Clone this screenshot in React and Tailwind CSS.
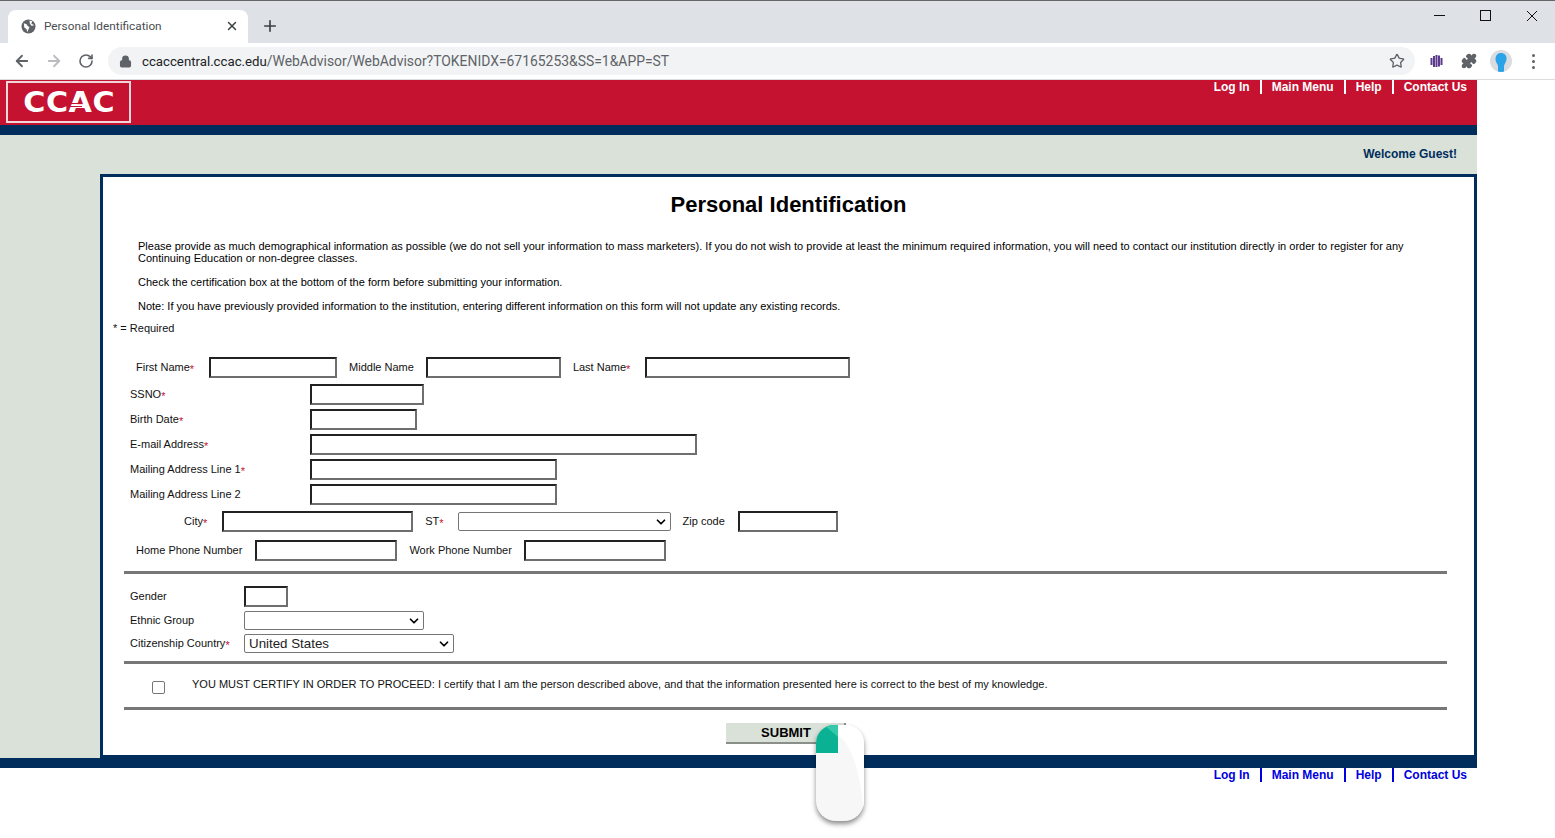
import { ArrowLeft, ArrowRight, RotateCw, Lock, Star, Puzzle, Plus, X, ChevronDown } from 'lucide-react';

const Req = () => <span className="relative top-[2px] text-[#c8102e]">*</span>;

// labels sit a pixel above the centre of their field
const Label = ({ className = '', children }) => <span className={`mb-[2px] ${className}`}>{children}</span>;

const Field = ({ w }) => (
  <input
    type="text"
    className={`h-[21px] shrink-0 border-2 border-t-[#222] border-l-[#222] border-r-[#6e6e6e] border-b-[#6e6e6e] bg-white ${w}`}
  />
);

const Select = ({ w, value, big }) => (
  <div className={`flex h-[19px] items-center justify-between rounded-[2px] border border-[#767676] bg-white pl-[4px] pr-[2px] ${w} ${big ? 'text-[13.33px] text-[#222]' : ''}`}>
    <span>{value}</span>
    <ChevronDown size={14} strokeWidth={3} className="text-black" />
  </div>
);

const NavLinks = ({ color }) => (
  <div className={`flex justify-end pr-[10px] text-[12px] font-bold leading-[14px] ${color}`}>
    <span className="pr-[10px]">Log In</span>
    <span className="border-l-2 border-current pl-[10px] pr-[10px]">Main Menu</span>
    <span className="border-l-2 border-current pl-[10px] pr-[10px]">Help</span>
    <span className="border-l-2 border-current pl-[10px]">Contact Us</span>
  </div>
);

const Row = ({ label, req, children, h }) => (
  <div className={`flex items-center pl-[27px] ${h}`}>
    <Label className="w-[180px] shrink-0">{label}{req && <Req />}</Label>
    {children}
  </div>
);

const Rule = ({ mt }) => <div className={`ml-[21px] mr-[27px] h-[3px] bg-[#777] ${mt}`} />;

const BrowserChrome = () => (
  <div className="h-[80px] border-b border-[#dadce0] bg-white" style={{ fontFamily: 'Roboto, "Open Sans", sans-serif' }}>
    <div className="flex h-[43px] border-t border-[#666] bg-[#dee1e6]">
      <div className="ml-[8px] mt-[9px] flex h-[33px] w-[240px] items-center rounded-t-[8px] bg-white pb-[1px] pl-[13px] pr-[9px]">
        <svg width="15" height="15" viewBox="0 0 16 16" className="shrink-0">
          <circle cx="8" cy="8" r="7.5" fill="#5f6368" />
          <path d="M3 4.500l3 1 1 2 2 1-1 2.500-1.500 3-.5-3-2.500-2zM9 1.500l3 1-1 2.500 3 1.500-2.500 1-2-2.500z" fill="#fff" />
        </svg>
        <span className="ml-[8px] mt-[2px] flex-1 text-[11.8px] text-[#4a4d51]">Personal Identification</span>
        <X size={14} strokeWidth={2.5} className="text-[#3c4043]" />
      </div>
      <Plus size={18} strokeWidth={2.2} className="ml-[13px] mt-[16px] text-[#3c4043]" />
      <div className="ml-auto flex h-[29px] items-center">
        <svg width="11" height="11" viewBox="0 0 11 11" className="mr-[35px]">
          <path d="M0 5.500h11" stroke="#111" strokeWidth="1" />
        </svg>
        <svg width="11" height="11" viewBox="0 0 11 11" className="mr-[35px]">
          <rect x="0.500" y="0.500" width="10" height="10" fill="none" stroke="#111" strokeWidth="1" />
        </svg>
        <svg width="12" height="12" viewBox="0 0 12 12" className="mr-[17px]">
          <path d="M1 1l10 10M11 1L1 11" stroke="#111" strokeWidth="1" />
        </svg>
      </div>
    </div>
    <div className="flex h-[36px] items-center">
      <ArrowLeft size={18} strokeWidth={2.4} className="ml-[13px] text-[#5f6368]" />
      <ArrowRight size={18} strokeWidth={2.4} className="ml-[14px] text-[#babcbe]" />
      <RotateCw size={16} strokeWidth={2.4} className="ml-[15px] text-[#5f6368]" />
      <div className="ml-[14px] flex h-[28px] w-[1307px] items-center rounded-full bg-[#f1f3f4] pl-[11px] pr-[10px]">
        <Lock size={13} strokeWidth={2.5} fill="#5f6368" className="text-[#5f6368]" />
        <span className="ml-[10px] flex-1 text-[13.92px] text-[#5f6368]">
          <span className="text-[13.22px] text-[#202124]">ccaccentral.ccac.edu</span>/WebAdvisor/WebAdvisor?TOKENIDX=67165253&amp;SS=1&amp;APP=ST
        </span>
        <Star size={16} strokeWidth={2} className="text-[#5f6368]" />
      </div>
      <svg width="14" height="14" viewBox="0 0 14 14" className="ml-[15px]">
        <path d="M1.500 4v7M4 2v11M6.500 1v12M9 1.500v11M11.500 4v7" stroke="#5b3a8c" strokeWidth="2" />
      </svg>
      <Puzzle size={16} fill="#5f6368" className="ml-[17px] text-[#5f6368]" />
      <div className="ml-[13px] flex h-[22px] w-[22px] items-end justify-center overflow-hidden rounded-full bg-[#dadce0]">
        <svg width="12" height="19" viewBox="0 0 12 19">
          <path d="M6 0c3.500 0 6 2.500 5.500 6.500-.4 3-2.500 4.500-2.500 7v5.500H3v-5.500C3 11 .5 9.500.500 6.500.500 2.500 2.500 0 6 0z" fill="#2ba3e8" />
        </svg>
      </div>
      <div className="ml-[20px] flex flex-col gap-[3px]">
        <span className="h-[3px] w-[3px] rounded-full bg-[#5f6368]" />
        <span className="h-[3px] w-[3px] rounded-full bg-[#5f6368]" />
        <span className="h-[3px] w-[3px] rounded-full bg-[#5f6368]" />
      </div>
    </div>
  </div>
);

const MouseOverlay = () => (
  <div className="absolute left-[816px] top-[725px] h-[96px] w-[48px] overflow-hidden rounded-b-[20px] rounded-t-[18px] bg-[#f7f7f7] shadow-[0_3px_5px_rgba(0,0,0,0.45)]">
    <svg width="48" height="96" viewBox="0 0 48 96">
      <path d="M22 0h26v96C46 50 36 20 22 10z" fill="#fff" />
      <rect width="22" height="28" fill="#0bb193" />
      <path d="M0 0h22v12L8 0z" fill="#34c9aa" />
    </svg>
  </div>
);

export default function App() {
  return (
    <div className="relative min-h-[838px] w-[1555px] overflow-hidden bg-white" style={{ fontFamily: '"Liberation Sans", Arial, sans-serif' }}>
      <BrowserChrome />
      <div className="w-[1477px]">
        <div className="flex h-[45px] items-start justify-between bg-[#c41230] text-white">
          <div className="relative ml-[6px] mt-[1px] flex h-[42px] w-[125px] items-center justify-center border-2 border-[#f0d5da] pl-[2px] pt-[1px]">
            <span className="scale-x-[1.04] text-[29px] font-bold leading-none tracking-[0.5px] text-white" style={{ fontFamily: '"DejaVu Sans", sans-serif' }}>CCAC</span>
            <div className="absolute left-[61px] top-[20px] flex w-[13px] flex-col gap-[2px]">
              <span className="h-px bg-[#c41230]" />
              <span className="h-px bg-[#c41230]" />
            </div>
          </div>
          <NavLinks color="text-white" />
        </div>
        <div className="h-[10px] bg-[#002d5c]" />
        <div className="flex h-[39px] items-center justify-end bg-[#d9e1d9] pb-[2px] pr-[20px] text-[12px] font-bold text-[#002d5c]">
          Welcome Guest!
        </div>
        <div className="flex bg-[#d9e1d9]">
          <div className="w-[100px] shrink-0" />
          <div className="h-[584px] flex-1 border-[3px] border-[#002d5c] bg-white text-[11px] leading-[12px] text-[#111]">
            <h1 className="mt-[16px] text-center text-[22px] font-bold leading-[24px] text-black">Personal Identification</h1>
            <div className="mt-[23px] pl-[35px] pr-[60px] text-black">
              <p>Please provide as much demographical information as possible (we do not sell your information to mass marketers). If you do not wish to provide at least the minimum required information, you will need to contact our institution directly in order to register for any Continuing Education or non-degree classes.</p>
              <p className="mt-[12px]">Check the certification box at the bottom of the form before submitting your information.</p>
              <p className="mt-[12px]">Note: If you have previously provided information to the institution, entering different information on this form will not update any existing records.</p>
            </div>
            <p className="mt-[10px] pl-[10px]">* = Required</p>

            <div className="mt-[23px] flex h-[21px] items-center pl-[33px]">
              <Label>First Name<Req /></Label>
              <span className="w-[15px]" />
              <Field w="w-[128px]" />
              <Label className="ml-[12px]">Middle Name</Label>
              <span className="w-[12px]" />
              <Field w="w-[135px]" />
              <Label className="ml-[12px]">Last Name<Req /></Label>
              <span className="w-[15px]" />
              <Field w="w-[205px]" />
            </div>
            <Row label="SSNO" req h="mt-[6px] h-[21px]"><Field w="w-[114px]" /></Row>
            <Row label="Birth Date" req h="mt-[4px] h-[21px]"><Field w="w-[107px]" /></Row>
            <Row label="E-mail Address" req h="mt-[4px] h-[21px]"><Field w="w-[387px]" /></Row>
            <Row label="Mailing Address Line 1" req h="mt-[4px] h-[21px]"><Field w="w-[247px]" /></Row>
            <Row label="Mailing Address Line 2" h="mt-[4px] h-[21px]"><Field w="w-[247px]" /></Row>

            <div className="mt-[6px] flex h-[21px] items-center pl-[81px]">
              <Label>City<Req /></Label>
              <span className="w-[15px]" />
              <Field w="w-[191px]" />
              <Label className="ml-[12px]">ST<Req /></Label>
              <span className="w-[14px]" />
              <Select w="w-[213px]" />
              <Label className="ml-[12px]">Zip code</Label>
              <span className="w-[13px]" />
              <Field w="w-[100px]" />
            </div>
            <div className="mt-[8px] flex h-[21px] items-center pl-[33px]">
              <Label>Home Phone Number</Label>
              <span className="w-[13px]" />
              <Field w="w-[142px]" />
              <Label className="ml-[12px]">Work Phone Number</Label>
              <span className="w-[12px]" />
              <Field w="w-[142px]" />
            </div>
            <Rule mt="mt-[10px]" />

            <div className="mt-[12px] flex h-[21px] items-center pl-[27px]">
              <Label className="w-[114px] shrink-0">Gender</Label>
              <Field w="w-[44px]" />
            </div>
            <div className="mt-[4px] flex h-[19px] items-center pl-[27px]">
              <Label className="w-[114px] shrink-0">Ethnic Group</Label>
              <Select w="w-[180px]" />
            </div>
            <div className="mt-[4px] flex h-[19px] items-center pl-[27px]">
              <Label className="w-[114px] shrink-0">Citizenship Country<Req /></Label>
              <Select w="w-[210px]" value="United States" big />
            </div>
            <Rule mt="mt-[8px]" />
            <div className="mt-[14px] flex items-start pl-[49px]">
              <input type="checkbox" className="mt-[3px] h-[13px] w-[13px] shrink-0 appearance-none rounded-[2px] border border-[#767676] bg-white" />
              <span className="ml-[27px]">YOU MUST CERTIFY IN ORDER TO PROCEED: I certify that I am the person described above, and that the information presented here is correct to the best of my knowledge.</span>
            </div>
            <Rule mt="mt-[13px]" />
            <div className="mt-[13px] flex justify-center pr-[5px]">
              <button type="button" className="h-[21px] w-[120px] border-b-2 border-r-2 border-[#8a8f8a] bg-[#d9e1d9] pl-[2px] pt-[1px] text-[13px] font-bold text-black">SUBMIT</button>
            </div>
          </div>
        </div>
        <div className="h-[10px] bg-[#002d5c]" />
        <div className="pt-0">
          <NavLinks color="text-[#0000e0]" />
        </div>
      </div>
      <MouseOverlay />
    </div>
  );
}
